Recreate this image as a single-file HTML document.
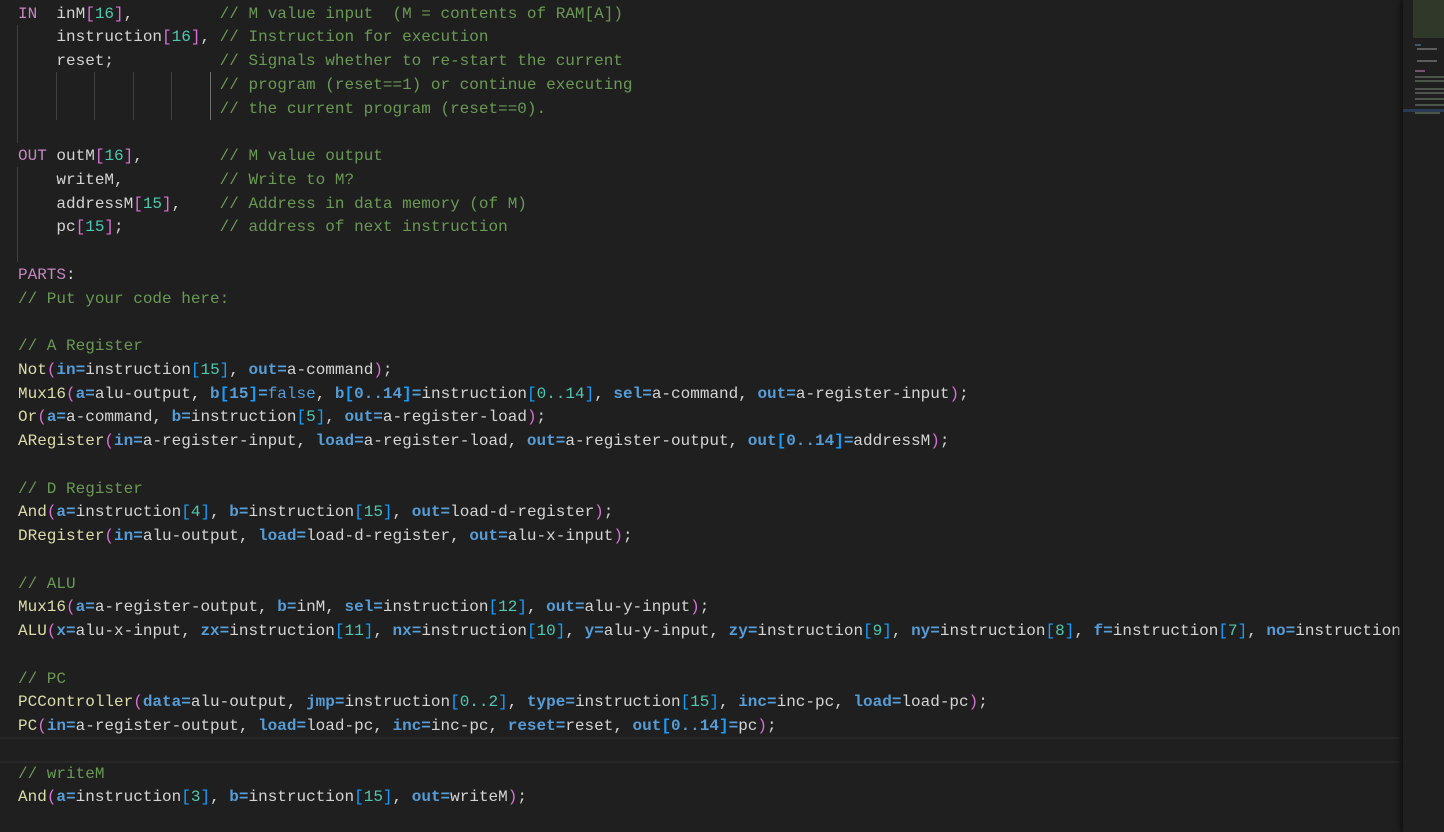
<!DOCTYPE html>
<html><head><meta charset="utf-8"><style>
html,body{margin:0;padding:0;background:#1f1f1f;width:1444px;height:832px;overflow:hidden}
#ed{position:absolute;left:0;top:0;width:1403px;height:832px;overflow:hidden;background:#1f1f1f}
.l{position:absolute;left:18px;height:23.75px;line-height:23.75px;white-space:pre;font-family:"Liberation Mono",monospace;font-size:16px;color:#d4d4d4;margin-top:1.5px}
.c{color:#6a9955}.k{color:#c586c0}.p{color:#da70d6}.b{color:#179fff}.n{color:#4ec9b0}.a{color:#569cd6;font-weight:bold}.f{color:#dcdcaa}.v{color:#569cd6}
.g{position:absolute;width:1px;background:#404040}
#cur{position:absolute;left:0;top:737px;width:1403px;height:22px;border-top:2px solid #282828;border-bottom:2px solid #282828}
#mm{position:absolute;left:1403px;top:0;width:41px;height:832px;background:#1f1f1f;box-shadow:-3px 0 5px #111}
.m{position:absolute;height:2px;opacity:.5}
</style></head><body>
<div id="ed">
<div id="cur"></div>
<div class="g" style="left:17px;top:25px;height:118px"></div>
<div class="g" style="left:17px;top:167px;height:95px"></div>
<div class="g" style="left:56px;top:72px;height:48px"></div>
<div class="g" style="left:94px;top:72px;height:48px"></div>
<div class="g" style="left:133px;top:72px;height:48px"></div>
<div class="g" style="left:171px;top:72px;height:48px"></div>
<div class="g" style="left:210px;top:72px;height:48px;background:#707070"></div>

<div class="l" style="top:1px"><span class="k">IN</span>  inM<span class="p">[</span><span class="n">16</span><span class="p">]</span>,         <span class="c">// M value input  (M = contents of RAM[A])</span></div>
<div class="l" style="top:24.75px">    instruction<span class="p">[</span><span class="n">16</span><span class="p">]</span>, <span class="c">// Instruction for execution</span></div>
<div class="l" style="top:48.5px">    reset;           <span class="c">// Signals whether to re-start the current</span></div>
<div class="l" style="top:72.25px">                     <span class="c">// program (reset==1) or continue executing</span></div>
<div class="l" style="top:96px">                     <span class="c">// the current program (reset==0).</span></div>
<div class="l" style="top:143.5px"><span class="k">OUT</span> outM<span class="p">[</span><span class="n">16</span><span class="p">]</span>,        <span class="c">// M value output</span></div>
<div class="l" style="top:167.25px">    writeM,          <span class="c">// Write to M?</span></div>
<div class="l" style="top:191px">    addressM<span class="p">[</span><span class="n">15</span><span class="p">]</span>,    <span class="c">// Address in data memory (of M)</span></div>
<div class="l" style="top:214.75px">    pc<span class="p">[</span><span class="n">15</span><span class="p">]</span>;          <span class="c">// address of next instruction</span></div>
<div class="l" style="top:262.25px"><span class="k">PARTS</span>:</div>
<div class="l" style="top:286px"><span class="c">// Put your code here:</span></div>
<div class="l" style="top:333.5px"><span class="c">// A Register</span></div>
<div class="l" style="top:357.25px"><span class="f">Not</span><span class="p">(</span><span class="a">in=</span>instruction<span class="b">[</span><span class="n">15</span><span class="b">]</span>, <span class="a">out=</span>a-command<span class="p">)</span>;</div>
<div class="l" style="top:381px"><span class="f">Mux16</span><span class="p">(</span><span class="a">a=</span>alu-output, <span class="a">b<span class="b">[</span>15<span class="b">]</span>=</span><span class="v">false</span>, <span class="a">b<span class="b">[</span>0..14<span class="b">]</span>=</span>instruction<span class="b">[</span><span class="n">0..14</span><span class="b">]</span>, <span class="a">sel=</span>a-command, <span class="a">out=</span>a-register-input<span class="p">)</span>;</div>
<div class="l" style="top:404.75px"><span class="f">Or</span><span class="p">(</span><span class="a">a=</span>a-command, <span class="a">b=</span>instruction<span class="b">[</span><span class="n">5</span><span class="b">]</span>, <span class="a">out=</span>a-register-load<span class="p">)</span>;</div>
<div class="l" style="top:428.5px"><span class="f">ARegister</span><span class="p">(</span><span class="a">in=</span>a-register-input, <span class="a">load=</span>a-register-load, <span class="a">out=</span>a-register-output, <span class="a">out<span class="b">[</span>0..14<span class="b">]</span>=</span>addressM<span class="p">)</span>;</div>
<div class="l" style="top:476px"><span class="c">// D Register</span></div>
<div class="l" style="top:499.75px"><span class="f">And</span><span class="p">(</span><span class="a">a=</span>instruction<span class="b">[</span><span class="n">4</span><span class="b">]</span>, <span class="a">b=</span>instruction<span class="b">[</span><span class="n">15</span><span class="b">]</span>, <span class="a">out=</span>load-d-register<span class="p">)</span>;</div>
<div class="l" style="top:523.5px"><span class="f">DRegister</span><span class="p">(</span><span class="a">in=</span>alu-output, <span class="a">load=</span>load-d-register, <span class="a">out=</span>alu-x-input<span class="p">)</span>;</div>
<div class="l" style="top:571px"><span class="c">// ALU</span></div>
<div class="l" style="top:594.75px"><span class="f">Mux16</span><span class="p">(</span><span class="a">a=</span>a-register-output, <span class="a">b=</span>inM, <span class="a">sel=</span>instruction<span class="b">[</span><span class="n">12</span><span class="b">]</span>, <span class="a">out=</span>alu-y-input<span class="p">)</span>;</div>
<div class="l" style="top:618.5px"><span class="f">ALU</span><span class="p">(</span><span class="a">x=</span>alu-x-input, <span class="a">zx=</span>instruction<span class="b">[</span><span class="n">11</span><span class="b">]</span>, <span class="a">nx=</span>instruction<span class="b">[</span><span class="n">10</span><span class="b">]</span>, <span class="a">y=</span>alu-y-input, <span class="a">zy=</span>instruction<span class="b">[</span><span class="n">9</span><span class="b">]</span>, <span class="a">ny=</span>instruction<span class="b">[</span><span class="n">8</span><span class="b">]</span>, <span class="a">f=</span>instruction<span class="b">[</span><span class="n">7</span><span class="b">]</span>, <span class="a">no=</span>instruction<span class="b">[</span><span class="n">6</span><span class="b">]</span>, <span class="a">out=</span>alu-output<span class="p">)</span>;</div>
<div class="l" style="top:666px"><span class="c">// PC</span></div>
<div class="l" style="top:689.75px"><span class="f">PCController</span><span class="p">(</span><span class="a">data=</span>alu-output, <span class="a">jmp=</span>instruction<span class="b">[</span><span class="n">0..2</span><span class="b">]</span>, <span class="a">type=</span>instruction<span class="b">[</span><span class="n">15</span><span class="b">]</span>, <span class="a">inc=</span>inc-pc, <span class="a">load=</span>load-pc<span class="p">)</span>;</div>
<div class="l" style="top:713.5px"><span class="f">PC</span><span class="p">(</span><span class="a">in=</span>a-register-output, <span class="a">load=</span>load-pc, <span class="a">inc=</span>inc-pc, <span class="a">reset=</span>reset, <span class="a">out<span class="b">[</span>0..14<span class="b">]</span>=</span>pc<span class="p">)</span>;</div>
<div class="l" style="top:761px"><span class="c">// writeM</span></div>
<div class="l" style="top:784.75px"><span class="f">And</span><span class="p">(</span><span class="a">a=</span>instruction<span class="b">[</span><span class="n">3</span><span class="b">]</span>, <span class="a">b=</span>instruction<span class="b">[</span><span class="n">15</span><span class="b">]</span>, <span class="a">out=</span>writeM<span class="p">)</span>;</div>
</div>
<div id="mm">
<div style="position:absolute;left:10px;top:0;width:31px;height:38px;background:#3b4a30;opacity:.6"></div>
<div class="m" style="left:12px;top:44px;width:6px;background:#6a8ab0"></div>
<div class="m" style="left:14px;top:48px;width:20px;background:#999"></div>
<div class="m" style="left:14px;top:60px;width:20px;background:#999"></div>
<div class="m" style="left:12px;top:70px;width:10px;background:#c586c0"></div>
<div class="m" style="left:12px;top:76px;width:29px;background:#7a8a7a"></div>
<div class="m" style="left:12px;top:80px;width:29px;background:#7a8a7a"></div>
<div class="m" style="left:12px;top:88px;width:29px;background:#7a8a7a"></div>
<div class="m" style="left:12px;top:92px;width:29px;background:#7a8a7a"></div>
<div class="m" style="left:12px;top:98px;width:29px;background:#7a8a7a"></div>
<div class="m" style="left:12px;top:104px;width:29px;background:#7a8a7a"></div>
<div class="m" style="left:0;top:109px;width:41px;background:#2a3e5a;height:3px;opacity:.9"></div>
<div class="m" style="left:12px;top:112px;width:25px;background:#7a8a7a"></div>
</div>
</body></html>
